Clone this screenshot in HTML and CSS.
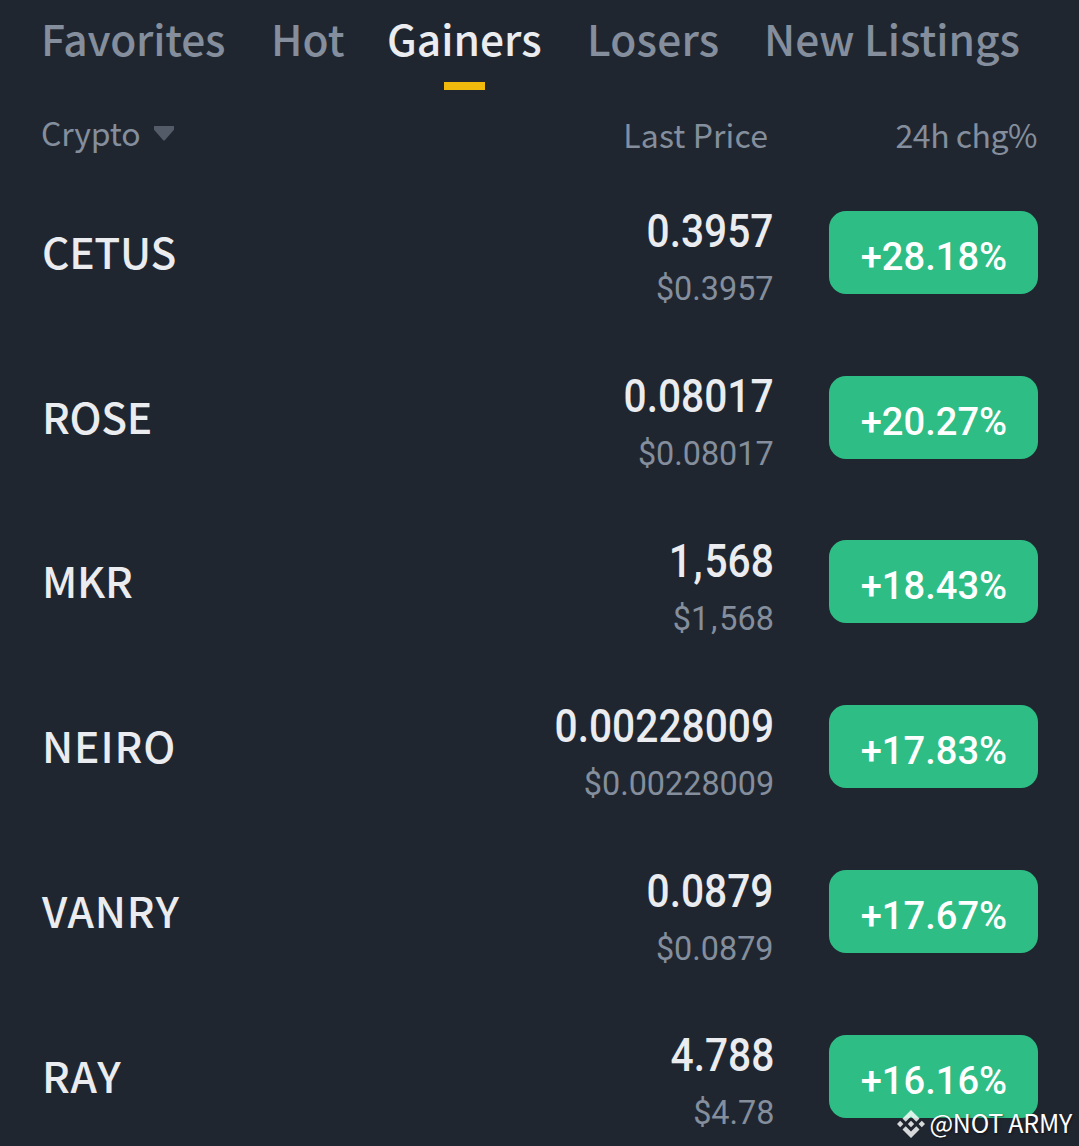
FILE: index.html
```
<!DOCTYPE html>
<html lang="en">
<head>
    <meta charset="UTF-8">
    <meta name="viewport" content="width=device-width, initial-scale=1.0">
    <title>Markets - Gainers</title>
    <link rel="stylesheet" href="styles.css">
</head>
<body>
    <div class="market">
        <nav class="tabs">
            <a class="tab tab-favorites">Favorites</a>
            <a class="tab tab-hot">Hot</a>
            <a class="tab tab-gainers active">Gainers</a>
            <a class="tab tab-losers">Losers</a>
            <a class="tab tab-new">New Listings</a>
        </nav>

        <div class="list-head">
            <div class="head-crypto">
                <span>Crypto</span>
                <svg class="caret" viewBox="0 0 20 15"><path d="M0 0H20V3.8L11 14Q10 15 9 14L0 3.8Z"/></svg>
            </div>
            <div class="head-price">Last Price</div>
            <div class="head-change">24h chg%</div>
        </div>

        <div class="list">
            <div class="row">
                <div class="symbol">CETUS</div>
                <div class="prices"><div class="price">0.3957</div><div class="fiat">$0.3957</div></div>
                <div class="change"><span>+28.18%</span></div>
            </div>
            <div class="row">
                <div class="symbol">ROSE</div>
                <div class="prices"><div class="price">0.08017</div><div class="fiat">$0.08017</div></div>
                <div class="change"><span>+20.27%</span></div>
            </div>
            <div class="row">
                <div class="symbol">MKR</div>
                <div class="prices"><div class="price">1<span class="comma">,</span>568</div><div class="fiat">$1<span class="comma">,</span>568</div></div>
                <div class="change"><span>+18.43%</span></div>
            </div>
            <div class="row">
                <div class="symbol wide">NEIRO</div>
                <div class="prices"><div class="price">0.00228009</div><div class="fiat">$0.00228009</div></div>
                <div class="change"><span>+17.83%</span></div>
            </div>
            <div class="row">
                <div class="symbol wide">VANRY</div>
                <div class="prices"><div class="price">0.0879</div><div class="fiat">$0.0879</div></div>
                <div class="change"><span>+17.67%</span></div>
            </div>
            <div class="row">
                <div class="symbol wide">RAY</div>
                <div class="prices"><div class="price">4.788</div><div class="fiat">$4.78</div></div>
                <div class="change"><span>+16.16%</span></div>
            </div>
        </div>

        <div class="watermark">
            <svg class="logo" viewBox="0 0 28 28">
                <path d="M14 0L22.5 8.5L19.3 11.7L14 6.4L8.7 11.7L5.5 8.5Z"/>
                <path d="M14 28L22.5 19.5L19.3 16.3L14 21.6L8.7 16.3L5.5 19.5Z"/>
                <path d="M14 10.8L17.2 14L14 17.2L10.8 14Z"/>
                <path d="M3.2 10.8L6.4 14L3.2 17.2L0 14Z"/>
                <path d="M24.8 10.8L28 14L24.8 17.2L21.6 14Z"/>
            </svg>
            <span>@NOT ARMY</span>
        </div>
    </div>
</body>
</html>
```
FILE: styles.css
```
:root {
    --color-bg: #202630;
    --color-text: #eaecef;
    --color-muted: #848e9c;
    --color-up: #2ebd85;
    --color-accent: #f0b90b;
}

* {
    margin: 0;
    padding: 0;
    box-sizing: border-box;
}

body {
    font-family: "Noto Sans CJK SC", "Noto Sans", sans-serif;
    background: var(--color-bg);
    color: var(--color-text);
    overflow: hidden;
}

.market {
    position: relative;
    height: 1146px;
    overflow: hidden;
}

.tabs {
    display: flex;
    height: 90px;
    padding-left: 41px;
}

.tab {
    display: flex;
    flex-direction: column;
    justify-content: space-between;
    height: 90px;
    padding-top: 7px;
    font-size: 42.5px;
    font-weight: 500;
    line-height: 62px;
    white-space: nowrap;
    color: var(--color-muted);
}

.tab-favorites {
    width: 230px;
    letter-spacing: -0.2px;
}

.tab-hot { width: 116px; }
.tab-gainers { width: 200px; }

.tab-losers {
    width: 177px;
    letter-spacing: 0.2px;
}

.tab.active {
    color: var(--color-text);
}

.tab.active::after {
    content: "";
    width: 41px;
    height: 8px;
    margin-left: 57px;
    background: var(--color-accent);
}

.list-head {
    display: flex;
    height: 80px;
    padding: 21px 42px 0 41px;
    font-size: 32px;
    line-height: 46px;
    color: var(--color-muted);
}

.head-crypto {
    display: flex;
    flex: 1;
    gap: 14px;
    margin-top: -2px;
    letter-spacing: -0.2px;
}

.caret {
    width: 20px;
    height: 15px;
    margin-top: 17px;
    fill: #535b69;
}

.head-price {
    letter-spacing: 0.1px;
}

.head-change {
    width: 269px;
    text-align: right;
    letter-spacing: -0.5px;
}

.row {
    display: grid;
    grid-template-columns: 1fr auto 209px;
    column-gap: 55px;
    align-items: center;
    height: 164.8px;
    padding: 0 41px 0 42px;
}

.symbol {
    margin-top: -3px;
    font-size: 42.5px;
    font-weight: 500;
    line-height: 62px;
    letter-spacing: -0.3px;
}

.symbol.wide {
    letter-spacing: 0.9px;
}

.prices {
    padding-top: 16px;
    font-family: Roboto, sans-serif;
    text-align: right;
}

.price {
    font-size: 46px;
    font-weight: 500;
    line-height: 58px;
    transform: scaleX(0.885);
    transform-origin: right;
}

.fiat {
    font-size: 33px;
    line-height: 58px;
    color: var(--color-muted);
    transform: scaleX(0.98);
    transform-origin: right;
}

/* the comma takes as much room as the decimal point */
.comma {
    margin: 0 2px;
}

.change {
    display: flex;
    align-items: center;
    justify-content: center;
    height: 83px;
    padding-top: 8px;
    border-radius: 17px;
    background: var(--color-up);
    color: #fff;
    font-family: Roboto, sans-serif;
    font-size: 39.5px;
    font-weight: 500;
}

.change span {
    transform: scaleX(0.965);
}

.watermark {
    position: absolute;
    right: 7px;
    bottom: 6px;
    display: flex;
    align-items: center;
    gap: 4px;
    font-size: 25px;
    line-height: 36px;
    letter-spacing: -0.25px;
    color: #fff;
    text-shadow: 1px 1px 2px rgba(0, 0, 0, 0.5);
}

.watermark span {
    margin-top: -3px;
}

.logo {
    width: 28px;
    height: 28px;
    fill: #fff;
    opacity: 0.82;
}
```
